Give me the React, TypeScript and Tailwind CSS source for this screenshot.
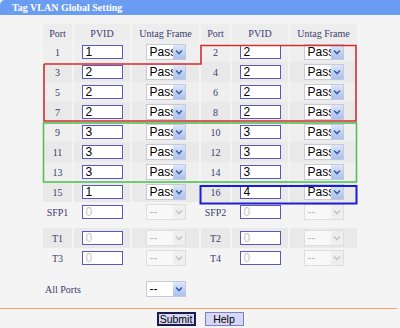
import React from 'react'

const serif = "font-['Liberation_Serif','Times_New_Roman',serif]"
const sans = "font-['Liberation_Sans',Arial,sans-serif]"
const cols = 'grid grid-cols-[29px_56px_67px_29px_56px_67px] gap-x-[2px]'

const rows = [
  { l: '1', lv: '1', r: '2', rv: '2' },
  { l: '3', lv: '2', r: '4', rv: '2' },
  { l: '5', lv: '2', r: '6', rv: '2' },
  { l: '7', lv: '2', r: '8', rv: '2' },
  { l: '9', lv: '3', r: '10', rv: '3' },
  { l: '11', lv: '3', r: '12', rv: '3' },
  { l: '13', lv: '3', r: '14', rv: '3' },
  { l: '15', lv: '1', r: '16', rv: '4' },
]

function Sel({ value, disabled }: { value: string; disabled?: boolean }) {
  return (
    <div
      className={`flex h-[16px] w-[40px] items-stretch border ${
        disabled ? 'border-[#dedede] bg-[#f8f8f8]' : 'border-[#c8c8d6] bg-white'
      }`}
    >
      <span
        className={`flex-1 overflow-hidden whitespace-nowrap pl-[3px] text-[12px] leading-[14px] ${sans} ${
          disabled ? 'text-[#b8b8b8]' : 'text-black'
        }`}
      >
        {value}
      </span>
      <span
        className={`flex w-[12px] items-center justify-center ${
          disabled ? 'bg-[#efefef]' : 'bg-linear-to-b from-[#dce7fb] to-[#a8c1ef]'
        }`}
      >
        <svg width="8" height="6" viewBox="0 0 8 6">
          <path
            d="M1 1.5 L4 4.5 L7 1.5"
            fill="none"
            stroke={disabled ? '#c6c6c6' : '#3b5ea8'}
            strokeWidth="1.6"
          />
        </svg>
      </span>
    </div>
  )
}

function Pvid({ v, disabled }: { v: string; disabled?: boolean }) {
  return (
    <input
      readOnly
      value={v}
      className={`h-[14px] w-[41px] border border-[#5a5ab6] bg-white pl-[3px] text-[12px] leading-[12px] outline-none ${sans} ${
        disabled ? 'text-[#c4c4c4]' : 'text-black'
      }`}
    />
  )
}

function Row({
  a,
  av,
  b,
  bv,
  shade,
  sel,
  disabled,
}: {
  a: string
  av: string
  b: string
  bv: string
  shade: string
  sel: string
  disabled?: boolean
}) {
  const cell = `flex items-center justify-center ${shade}`
  const lbl = `${cell} ${serif} text-[10px] text-[#3c3c70]`
  return (
    <div className={`${cols} h-[20px]`}>
      <div className={lbl}>{a}</div>
      <div className={cell}>
        <Pvid v={av} disabled={disabled} />
      </div>
      <div className={cell}>
        <Sel value={sel} disabled={disabled} />
      </div>
      <div className={lbl}>{b}</div>
      <div className={cell}>
        <Pvid v={bv} disabled={disabled} />
      </div>
      <div className={cell}>
        <Sel value={sel} disabled={disabled} />
      </div>
    </div>
  )
}

export default function App() {
  const head = `flex items-center justify-center bg-[#ededed] ${serif} text-[10px] text-[#3c3c70]`
  return (
    <div className="relative h-[328px] w-[400px] overflow-hidden bg-[#f4f4f4]">
      <div
        className={`h-[15px] rounded-tl-[5px] bg-[#6a9cf2] pl-[12px] text-[10px] font-bold leading-[16px] text-white ${serif}`}
      >
        Tag VLAN Global Setting
      </div>

      <div className="mx-auto mt-[9px] w-[314px]">
        <div className={`${cols} h-[18px]`}>
          <div className={head}>Port</div>
          <div className={head}>PVID</div>
          <div className={head}>Untag Frame</div>
          <div className={head}>Port</div>
          <div className={head}>PVID</div>
          <div className={head}>Untag Frame</div>
        </div>
        {rows.map((r, i) => (
          <Row
            key={r.l}
            a={r.l}
            av={r.lv}
            b={r.r}
            bv={r.rv}
            sel="Pass"
            shade={i % 2 === 1 ? 'bg-[#e9e9e9]' : 'bg-[#efefef]'}
          />
        ))}
        <Row a="SFP1" av="0" b="SFP2" bv="0" sel="--" shade="" disabled />
        <div className="h-[6px]" />
        <Row a="T1" av="0" b="T2" bv="0" sel="--" shade="bg-[#e9e9e9]" disabled />
        <Row a="T3" av="0" b="T4" bv="0" sel="--" shade="" disabled />
        <div className="h-[11px]" />
        <div className={`${cols} h-[20px]`}>
          <div className={`col-span-2 flex items-center pl-[2px] ${serif} text-[10px] text-[#3c3c70]`}>
            All Ports
          </div>
          <div className="flex items-center justify-center">
            <Sel value="--" />
          </div>
        </div>
      </div>

      <div className="mt-[9px] h-px w-[397px] bg-[#f2a45a]" />

      <div className="mt-[3px] flex justify-center gap-[9px]">
        <button
          className={`h-[14px] w-[39px] border-2 border-[#1c1c4c] bg-[#d6d6f6] text-[10.5px] leading-[10px] text-black ${sans}`}
        >
          Submit
        </button>
        <button
          className={`h-[14px] w-[39px] border border-[#8080c2] bg-[#d6d6f6] text-[10.5px] leading-[12px] text-black ${sans}`}
        >
          Help
        </button>
      </div>

      <svg className="pointer-events-none absolute inset-0" width="400" height="328">
        <polyline
          points="44,64 201,64 201,45.5 356,45.5 356,121 44,121 44,64"
          fill="none"
          stroke="#d32f2f"
          strokeWidth="1.6"
        />
        <rect x="43.5" y="123" width="313" height="59" fill="none" stroke="#55c055" strokeWidth="1.6" />
        <rect x="200.5" y="186" width="156" height="17.5" fill="none" stroke="#1c1cd4" strokeWidth="2" />
      </svg>
    </div>
  )
}
